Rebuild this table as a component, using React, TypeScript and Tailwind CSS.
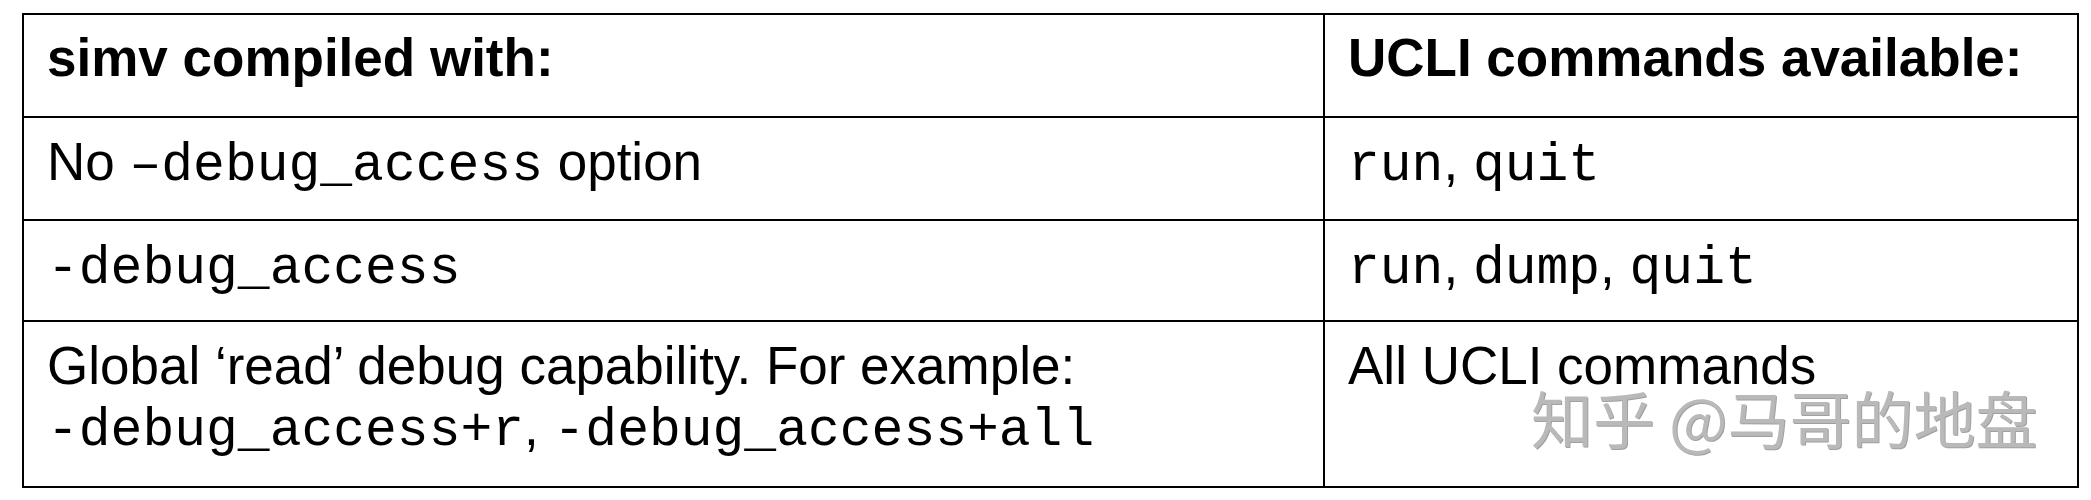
const sans = "font-['Liberation_Sans',Arial,sans-serif]";
const mono = "font-['Liberation_Mono','Courier_New',monospace]";

function Code({ children }: { children: React.ReactNode }) {
  return <span className={`${mono} text-[53px]`}>{children}</span>;
}

const rows = [
  {
    id: "none",
    height: "h-[103px]",
    left: (
      <>
        No <Code>–debug_access</Code> option
      </>
    ),
    right: (
      <>
        <Code>run</Code>, <Code>quit</Code>
      </>
    ),
  },
  {
    id: "plain",
    height: "h-[101px]",
    left: <Code>-debug_access</Code>,
    right: (
      <>
        <Code>run</Code>, <Code>dump</Code>, <Code>quit</Code>
      </>
    ),
  },
  {
    id: "read",
    height: "h-[166px]",
    left: (
      <>
        Global ‘read’ debug capability. For example:
        <br />
        <Code>-debug_access+r</Code>, <Code>-debug_access+all</Code>
      </>
    ),
    right: <>All UCLI commands</>,
  },
];

export default function App() {
  return (
    <div className={`h-[500px] w-[2091px] bg-white pl-[22px] pt-[13px] text-black ${sans}`}>
      <div className="relative w-[2057px]">
        <table className="w-full table-fixed border-collapse">
          <colgroup>
            <col className="w-[1301px]" />
            <col />
          </colgroup>
          <thead>
            <tr className="h-[103px]">
              <th className="border-2 border-black px-[23px] pt-[12px] text-left align-top text-[53px] font-bold leading-[61px]">
                simv compiled with:
              </th>
              <th className="border-2 border-black px-[23px] pt-[12px] text-left align-top text-[53px] font-bold leading-[61px]">
                UCLI commands available:
              </th>
            </tr>
          </thead>
          <tbody>
            {rows.map((row) => (
              <tr key={row.id} className={row.height}>
                <td className="border-2 border-black px-[23px] pt-[13px] align-top text-[53px] leading-[61px]">
                  {row.left}
                </td>
                <td className="border-2 border-black px-[23px] pt-[13px] align-top text-[53px] leading-[61px]">
                  {row.right}
                </td>
              </tr>
            ))}
          </tbody>
        </table>
        <div className="pointer-events-none absolute left-[1509px] top-[373px] font-['Noto_Sans_CJK_SC',sans-serif] text-[62px] leading-none whitespace-nowrap text-[#b9b9b9] [text-shadow:1px_1px_0_#a0a0a0]">
          知乎 @马哥的地盘
        </div>
      </div>
    </div>
  );
}
